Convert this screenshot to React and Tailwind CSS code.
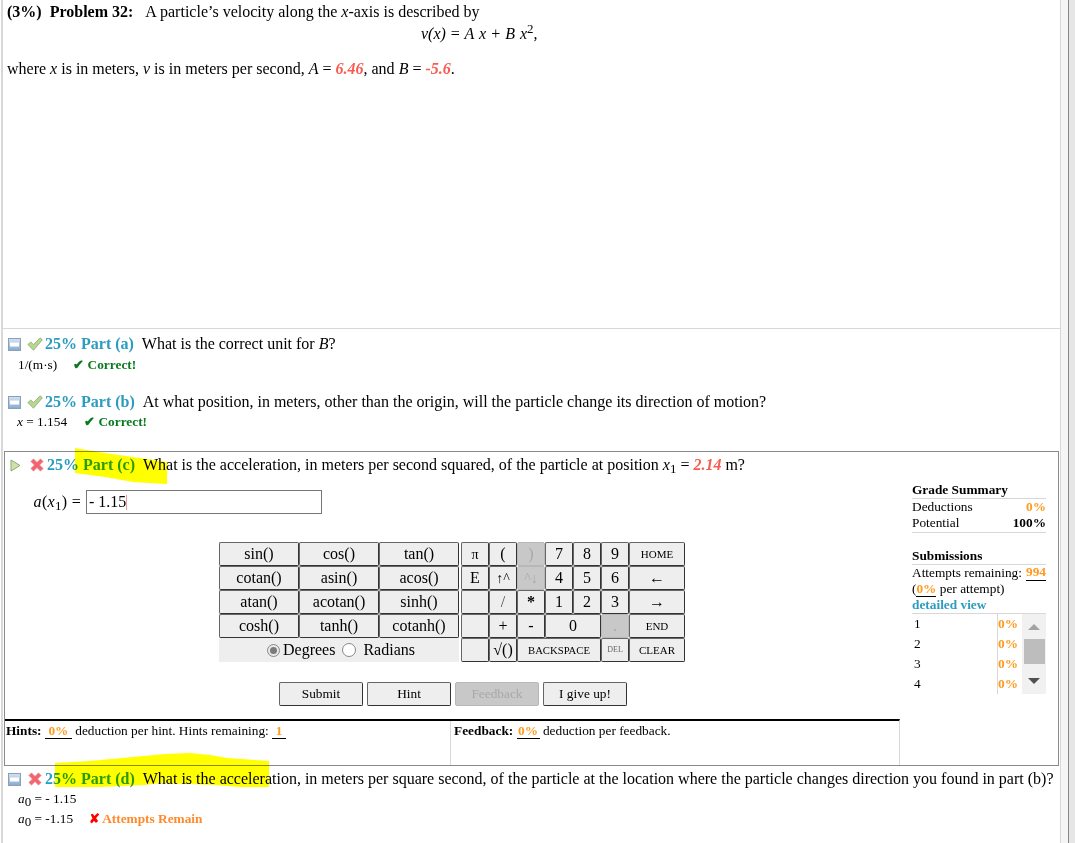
import React from "react";

const MinusBox = () => (
  <svg width="13" height="13" viewBox="0 0 13 13" className="shrink-0">
    <defs>
      <linearGradient id="mb" x1="0" y1="0" x2="0" y2="1">
        <stop offset="0" stopColor="#d5e3f2" />
        <stop offset="1" stopColor="#86a9cf" />
      </linearGradient>
    </defs>
    <rect x="0.5" y="0.5" width="12" height="12" fill="url(#mb)" stroke="#8a9fb8" />
    <rect x="2" y="4.5" width="9" height="4" fill="#ffffff" />
  </svg>
);

const Check = () => (
  <svg width="16" height="14" viewBox="0 0 16 14" className="shrink-0">
    <path d="M0.8 7.5 L3.8 5 L6.5 7.5 L13 0.8 L15.4 2.8 L6.5 13.2 Z" fill="#b9d68f" stroke="#8ba878" strokeWidth="0.8" />
  </svg>
);

const Cross = () => (
  <svg width="14" height="14" viewBox="0 0 14 14" className="shrink-0">
    <path d="M0.8 3.5 L3.5 0.8 L7 4.3 L10.5 0.8 L13.2 3.5 L9.7 7 L13.2 10.5 L10.5 13.2 L7 9.7 L3.5 13.2 L0.8 10.5 L4.3 7 Z" fill="#f2636d" stroke="#eba6ab" strokeWidth="0.8" />
  </svg>
);

const Arrow = () => (
  <svg width="11" height="13" viewBox="0 0 11 13" className="shrink-0">
    <path d="M1 1 L10 6.5 L1 12 Z" fill="#cfe3a8" stroke="#8fa878" strokeWidth="1" />
  </svg>
);

const Key = ({ children, disabled, className = "" }) => (
  <div
    className={`flex items-center justify-center border rounded-[2px] ${
      disabled ? "bg-[#c8c8c8] text-[#a8a8a8] border-[#b8b8b8]" : "bg-[#eeeeee] border-[#666] border-b-[#333] border-r-[#333]"
    } ${className}`}
  >
    {children}
  </div>
);

const funcs = ["sin()", "cos()", "tan()", "cotan()", "asin()", "acos()", "atan()", "acotan()", "sinh()", "cosh()", "tanh()", "cotanh()"];

const Sub = ({ children }) => <sub className="text-[13px] not-italic align-baseline relative -bottom-[3px] leading-none">{children}</sub>;

const Orange = ({ children, w }) => (
  <span className={`inline-block text-center font-bold text-[#ff9a1f] border-b border-black leading-[14px] ${w}`}>{children}</span>
);

const PartHead = ({ letter, children, mark = <Check />, lead = <MinusBox /> }) => (
  <div className="flex items-center h-[20px] text-[16px] leading-[20px] whitespace-nowrap">
    <span className="w-[13px] flex">{lead}</span>
    <span className="ml-[6px] w-[16px] flex justify-center">{mark}</span>
    <span className="ml-[2px] font-bold text-[#2b9cc0]">25% Part ({letter})</span>
    <span className="ml-[8px]">{children}</span>
  </div>
);

const SummaryRow = ({ label, value, className }) => (
  <div className="flex justify-between h-[16px] leading-[16px]">
    <span>{label}</span>
    <span className={`font-bold ${className}`}>{value}</span>
  </div>
);

const App = () => {
  return (
    <div className="relative w-[1075px] h-[843px] overflow-hidden bg-white text-black flex font-['Liberation_Serif',serif]">
      <div className="w-[1059px] ml-px shrink-0 h-full flex flex-col border-l-2 border-l-[#d8d8d8] pl-[3px]">
        {/* problem statement */}
        <div className="h-[328px] shrink-0 pl-px pt-[2px] text-[16px] leading-[20px]">
          <div className="h-[22px] whitespace-nowrap">
            <b>(3%)&nbsp; Problem 32:</b>
            <span className="ml-[12px]">A particle’s velocity along the <i>x</i>-axis is described by</span>
          </div>
          <div className="h-[24px] pl-[414px] whitespace-nowrap italic [word-spacing:1px]">
            v(x) <span className="not-italic">=</span> A x <span className="not-italic">+</span> B x<sup className="not-italic text-[13px]">2</sup><span className="not-italic">,</span>
          </div>
          <div className="pt-[11px] whitespace-nowrap">
            where <i>x</i> is in meters, <i>v</i> is in meters per second, <i>A</i> = <b className="italic text-[#f85c50]">6.46</b>, and <i>B</i> = <b className="italic text-[#f85c50]">-5.6</b>.
          </div>
        </div>

        <div className="border-t border-[#d8d8d8] -ml-[3px] pl-[5px] pt-[5px] h-[63px] shrink-0">
          <PartHead letter="a">What is the correct unit for <i>B</i>?</PartHead>
          <div className="flex items-center h-[20px] mt-[1px] pl-[10px] text-[13.33px] whitespace-nowrap">
            <span>1/(m·s)</span>
            <span className="ml-[16px] font-bold text-[#0a7a1e]">✔ Correct!</span>
          </div>
        </div>

        <div className="h-[60px] shrink-0 pt-px pl-[2px]">
          <PartHead letter="b">At what position, in meters, other than the origin, will the particle change its direction of motion?</PartHead>
          <div className="flex items-center h-[20px] pl-[9px] text-[13.33px] whitespace-nowrap">
            <span><i>x</i> = 1.154</span>
            <span className="ml-[17px] font-bold text-[#0a7a1e]">✔ Correct!</span>
          </div>
        </div>

        {/* active part */}
        <div className="-ml-[2px] w-[1055px] h-[315px] shrink-0 border border-[#8a8a8a] flex flex-col">
          <div className="flex flex-1">
            <div className="w-[895px] shrink-0 pl-[5px] pt-[3px]">
              <PartHead letter="c" lead={<Arrow />} mark={<Cross />}>
                What is the acceleration, in meters per second squared, of the particle at position <i>x</i><Sub>1</Sub> = <b className="italic text-[#f85c50]">2.14</b> m?
              </PartHead>
              <div className="flex items-center h-[24px] mt-[15px] text-[16px]">
                <span className="w-[76px] text-right pr-[5px] whitespace-nowrap tracking-[0.3px]"><i>a</i>(<i>x</i><Sub>1</Sub>) =</span>
                <div className="w-[236px] h-[24px] border border-[#777] flex items-center pl-[2px] text-[16px]">
                  - 1.15<span className="w-px h-[15px] bg-[#e89aa0]" />
                </div>
              </div>

              <div className="flex mt-[28px] ml-[209px] text-[16px]">
                <div className="w-[240px]">
                  <div className="grid grid-cols-3 auto-rows-[24px]">
                    {funcs.map((f) => (
                      <Key key={f}>{f}</Key>
                    ))}
                  </div>
                  <div className="h-[24px] bg-[#eeeeee] flex items-center pl-[48px]">
                    <span className="w-[13px] h-[13px] rounded-full border border-[#888] bg-[#e8e8e8] flex items-center justify-center">
                      <span className="w-[7px] h-[7px] rounded-full bg-[#7a7a7a]" />
                    </span>
                    <span className="ml-[3px]">Degrees</span>
                    <span className="ml-[7px] w-[14px] h-[14px] rounded-full border border-[#888] bg-white" />
                    <span className="ml-[7px]">Radians</span>
                  </div>
                </div>
                <div className="ml-[2px] w-[224px] grid grid-cols-8 auto-rows-[24px]">
                  <Key className="text-[14px]">π</Key>
                  <Key>(</Key>
                  <Key disabled>)</Key>
                  <Key>7</Key>
                  <Key>8</Key>
                  <Key>9</Key>
                  <Key className="col-span-2 text-[11px]">HOME</Key>

                  <Key>E</Key>
                  <Key className="text-[14px]">↑^</Key>
                  <Key disabled className="text-[14px]">^↓</Key>
                  <Key>4</Key>
                  <Key>5</Key>
                  <Key>6</Key>
                  <Key className="col-span-2">←</Key>

                  <Key />
                  <Key className="text-[#555]">/</Key>
                  <Key className="font-bold">*</Key>
                  <Key>1</Key>
                  <Key>2</Key>
                  <Key>3</Key>
                  <Key className="col-span-2">→</Key>

                  <Key />
                  <Key>+</Key>
                  <Key>-</Key>
                  <Key className="col-span-2">0</Key>
                  <Key disabled>.</Key>
                  <Key className="col-span-2 text-[11px]">END</Key>

                  <Key />
                  <Key>√()</Key>
                  <Key className="col-span-3 text-[10.7px]">BACKSPACE</Key>
                  <Key className="text-[8px] text-[#666]">DEL</Key>
                  <Key className="col-span-2 text-[11px]">CLEAR</Key>
                </div>
              </div>

              <div className="flex gap-[4px] mt-[20px] ml-[269px] text-[13.33px]">
                <Key className="w-[84px] h-[24px]">Submit</Key>
                <Key className="w-[84px] h-[24px]">Hint</Key>
                <Key disabled className="w-[84px] h-[24px]">Feedback</Key>
                <Key className="w-[84px] h-[24px]">I give up!</Key>
              </div>
            </div>

            {/* grade summary */}
            <div className="w-[134px] ml-[12px] pt-[30px] text-[13.33px]">
              <div className="font-bold h-[15px] leading-[15px] border-b border-[#d8d8d8] box-content pb-px">Grade Summary</div>
              <SummaryRow label="Deductions" value="0%" className="text-[#ff9a1f]" />
              <SummaryRow label="Potential" value="100%" />
              <div className="border-b border-[#d8d8d8] h-px mt-px" />
              <div className="font-bold mt-[15px] h-[15px] leading-[15px] border-b border-[#d8d8d8] box-content pb-[1px]">Submissions</div>
              <div className="leading-[16px] whitespace-nowrap">
                <div className="flex justify-between">
                  <span>Attempts remaining:</span>
                  <Orange w="w-[20px]">994</Orange>
                </div>
                <div>(<Orange w="w-[20px]">0%</Orange> per attempt)</div>
                <div className="font-bold text-[#2b9cc0]">detailed view</div>
              </div>
              <div className="border-t border-[#d8d8d8] flex h-[81px]">
                <div className="w-[85px] pl-[2px]">
                  {[1, 2, 3, 4].map((n) => (
                    <div key={n} className="h-[20px] leading-[20px]">{n}</div>
                  ))}
                </div>
                <div className="w-[25px] border-l border-[#d8d8d8]">
                  {[1, 2, 3, 4].map((n) => (
                    <div key={n} className="h-[20px] leading-[20px] font-bold text-[#ff9a1f]">0%</div>
                  ))}
                </div>
                <div className="w-[24px] bg-[#f1f1f1] flex flex-col items-center pt-[10px]">
                  <span className="w-0 h-0 border-x-[6px] border-x-transparent border-b-[6px] border-b-[#a3a3a3]" />
                  <span className="w-[21px] h-[25px] mt-[9px] bg-[#bdbdbd]" />
                  <span className="w-0 h-0 mt-[14px] border-x-[6px] border-x-transparent border-t-[6px] border-t-[#505050]" />
                </div>
              </div>
            </div>
          </div>

          {/* hints and feedback */}
          <div className="w-[895px] h-[46px] border-t-2 border-black flex text-[13.33px] leading-[16px] border-r border-r-[#d8d8d8]">
            <div className="w-[445px] pl-px pt-[2px] whitespace-nowrap">
              <b>Hints:</b> <Orange w="w-[27px]">0%</Orange> deduction per hint. Hints remaining: <Orange w="w-[14px]">1</Orange>
            </div>
            <div className="flex-1 border-l border-[#d8d8d8] pl-[3px] pt-[2px] whitespace-nowrap">
              <b>Feedback:</b> <Orange w="w-[23px]">0%</Orange> deduction per feedback.
            </div>
          </div>
        </div>

        <div className="pt-[3px] pl-[2px]">
          <PartHead letter="d" mark={<Cross />}>
            What is the acceleration, in meters per square second, of the particle at the location where the particle changes direction you found in part (b)?
          </PartHead>
          <div className="pl-[10px] text-[13.33px] whitespace-nowrap">
            <div className="h-[20px] leading-[20px]"><i>a</i><Sub>0</Sub> = - 1.15</div>
            <div className="h-[20px] leading-[20px] flex items-center">
              <span><i>a</i><Sub>0</Sub> = -1.15</span>
              <span className="ml-[16px] text-[#ff0000] font-bold">✘</span>
              <span className="ml-[2px] font-bold text-[#ff8a2a]">Attempts Remain</span>
            </div>
          </div>
        </div>
      </div>

      {/* page scrollbar edge */}
      <div className="w-[8px] h-full shrink-0 border-l border-[#d8d8d8] bg-[#f5f5f5]" />
      <div className="flex-1 h-full border-l border-[#888] bg-[#e6e6e6]" />

      {/* marker highlights drawn over the page */}
      <svg className="absolute left-0 top-0 mix-blend-multiply pointer-events-none" width="1075" height="843">
        <polygon points="75,448 105,453 133,457 167,462 167,484 133,482 105,477 75,473" fill="#ffff00" />
        <polygon points="55,763 90,761 133,757 165,754 190,753 210,755 227,758 269,761 269,787 240,787 215,785 190,784 160,783 145,785 100,787 55,787" fill="#ffff00" />
      </svg>
    </div>
  );
};

export default App;
